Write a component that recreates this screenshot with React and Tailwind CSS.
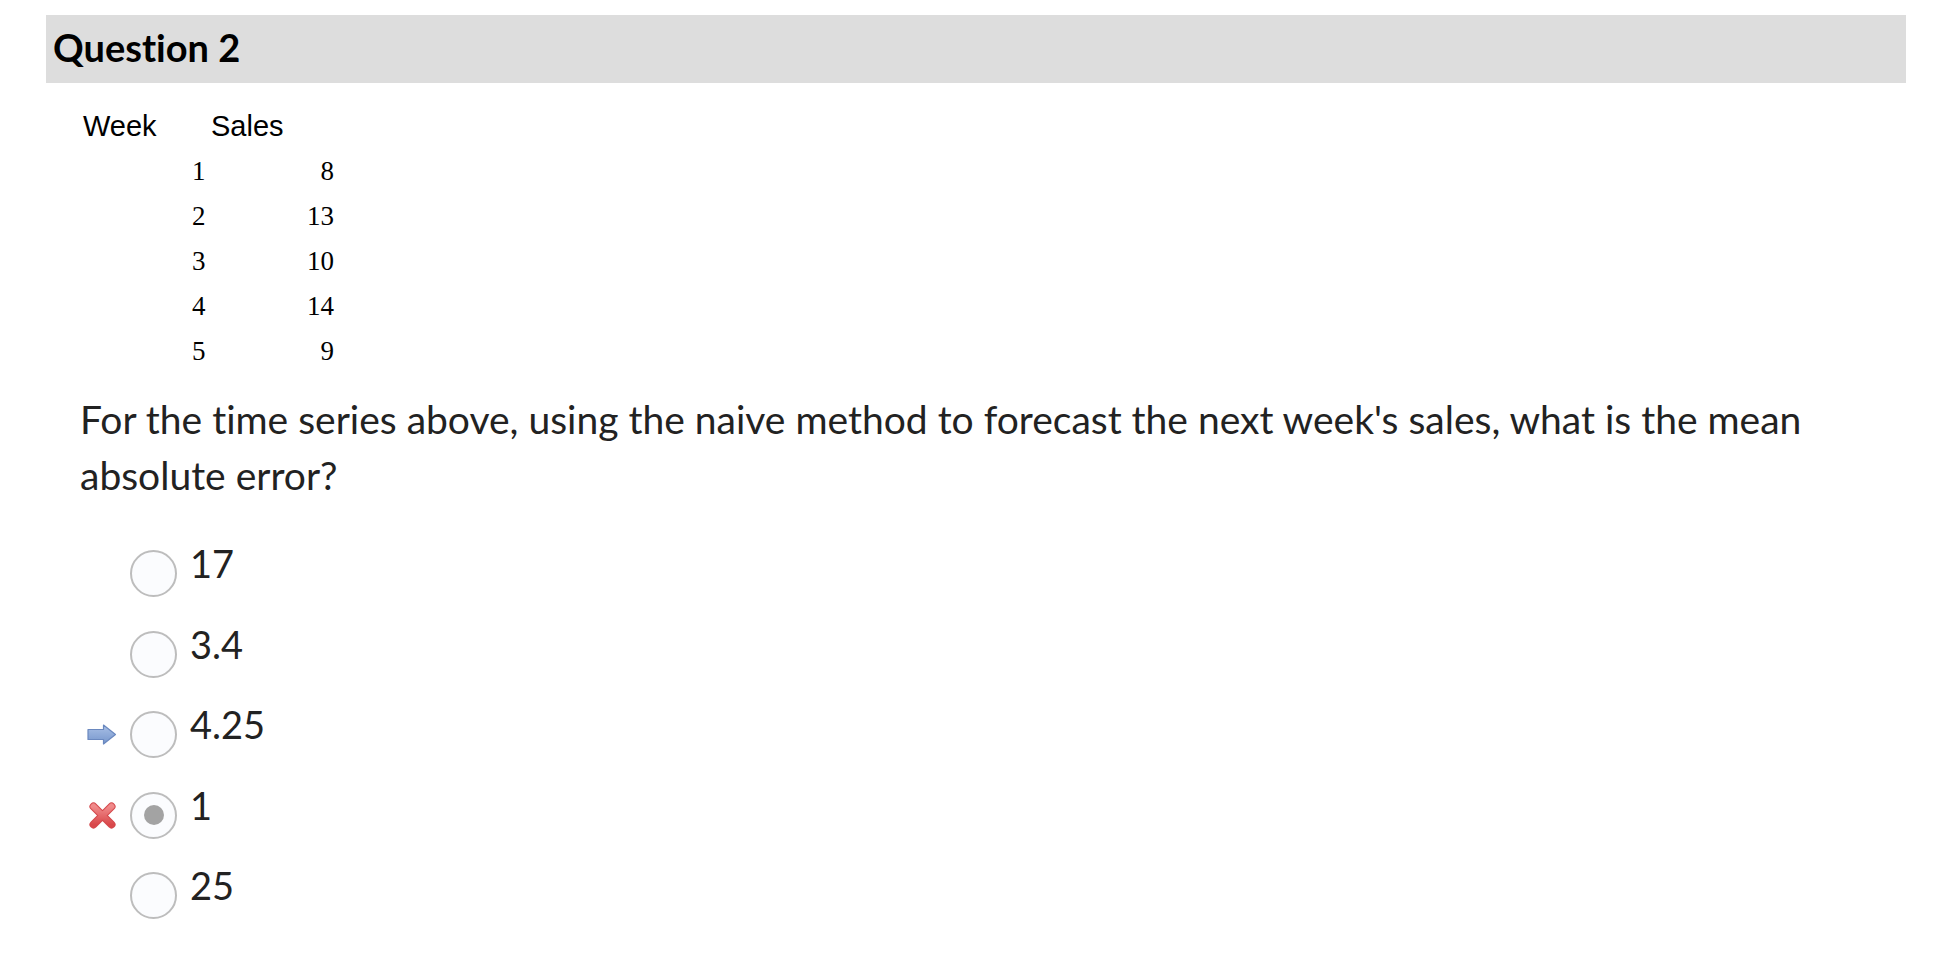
import React from "react";

const rows = [
  [1, 8],
  [2, 13],
  [3, 10],
  [4, 14],
  [5, 9],
];

const answers = [
  { label: "17", marker: null, selected: false },
  { label: "3.4", marker: null, selected: false },
  { label: "4.25", marker: "arrow", selected: false },
  { label: "1", marker: "x", selected: true },
  { label: "25", marker: null, selected: false },
];

function ArrowIcon() {
  return (
    <svg width="30" height="21" viewBox="0 0 30 21">
      <defs>
        <linearGradient id="ag" x1="0" y1="0" x2="0" y2="1">
          <stop offset="0" stopColor="#a9c0e6" />
          <stop offset="1" stopColor="#7696cc" />
        </linearGradient>
      </defs>
      <path
        d="M1 5.5 H16.5 V1 L28.5 10.5 L16.5 20 V15.5 H1 Z"
        fill="url(#ag)"
        stroke="#6a88bf"
        strokeWidth="1.2"
        strokeLinejoin="round"
      />
    </svg>
  );
}

function XIcon() {
  return (
    <svg width="27" height="27" viewBox="0 0 27 27">
      <defs>
        <linearGradient id="xg" x1="0" y1="0" x2="0" y2="1">
          <stop offset="0" stopColor="#f08a8a" />
          <stop offset="1" stopColor="#d9484b" />
        </linearGradient>
      </defs>
      <path
        d="M4.5 4.5 L22.5 22.5 M22.5 4.5 L4.5 22.5"
        stroke="#d4464a"
        strokeWidth="8"
        strokeLinecap="round"
      />
      <path
        d="M4.5 4.5 L22.5 22.5 M22.5 4.5 L4.5 22.5"
        stroke="url(#xg)"
        strokeWidth="6"
        strokeLinecap="round"
      />
    </svg>
  );
}

export default function App() {
  return (
    <div className="min-h-screen bg-white pt-[15px]">
      <div className="ml-[46px] w-[1860px]">
        <div
          className="h-[68px] bg-[#dddddd] pl-[7px] pt-[10px] text-[38px] font-bold leading-[45px] text-black [font-variant-ligatures:none]"
          style={{ fontFamily: "Lato, 'Noto Sans', sans-serif" }}
        >
          Question 2
        </div>

        <div className="ml-[37px] mt-[27px]">
          <div
            className="flex text-[29px] leading-[33px] text-black"
            style={{ fontFamily: "'Liberation Sans', Arial, sans-serif" }}
          >
            <div className="w-[128px]">Week</div>
            <div>Sales</div>
          </div>
          <div
            className="mt-[6px] text-[27px] leading-[45px] text-black"
            style={{ fontFamily: "'Liberation Serif', 'Times New Roman', serif" }}
          >
            {rows.map(([w, s]) => (
              <div key={w} className="flex">
                <div className="w-[109px]" />
                <div className="w-[40px]">{w}</div>
                <div className="w-[102px] text-right">{s}</div>
              </div>
            ))}
          </div>
        </div>

        <p
          className="ml-[34px] mt-[17px] pr-[10px] text-[39px] leading-[56px] text-[#222222] [font-variant-ligatures:none]"
          style={{ fontFamily: "Lato, 'Noto Sans', sans-serif" }}
        >
          For the time series above, using the naive method to forecast the next
          week's sales, what is the mean absolute error?
        </p>

        <div
          className="mt-[47px] flex flex-col gap-[33.5px] pl-[41px]"
          style={{ fontFamily: "Lato, 'Noto Sans', sans-serif" }}
        >
          {answers.map((a) => (
            <div key={a.label} className="flex items-start">
              <div className="flex h-[47px] w-[30px] items-center justify-center">
                {a.marker === "arrow" && <ArrowIcon />}
                {a.marker === "x" && <XIcon />}
              </div>
              <div className="ml-[13px] flex h-[47px] w-[47px] shrink-0 items-center justify-center rounded-full border-2 border-[#bdbdbd] bg-[#fbfcfe]">
                {a.selected && (
                  <div className="h-[20px] w-[20px] rounded-full bg-[#a3a3a3]" />
                )}
              </div>
              <div className="-mt-[10px] ml-[13px] text-[38px] leading-[47px] text-[#222222]">
                {a.label}
              </div>
            </div>
          ))}
        </div>
      </div>
    </div>
  );
}
